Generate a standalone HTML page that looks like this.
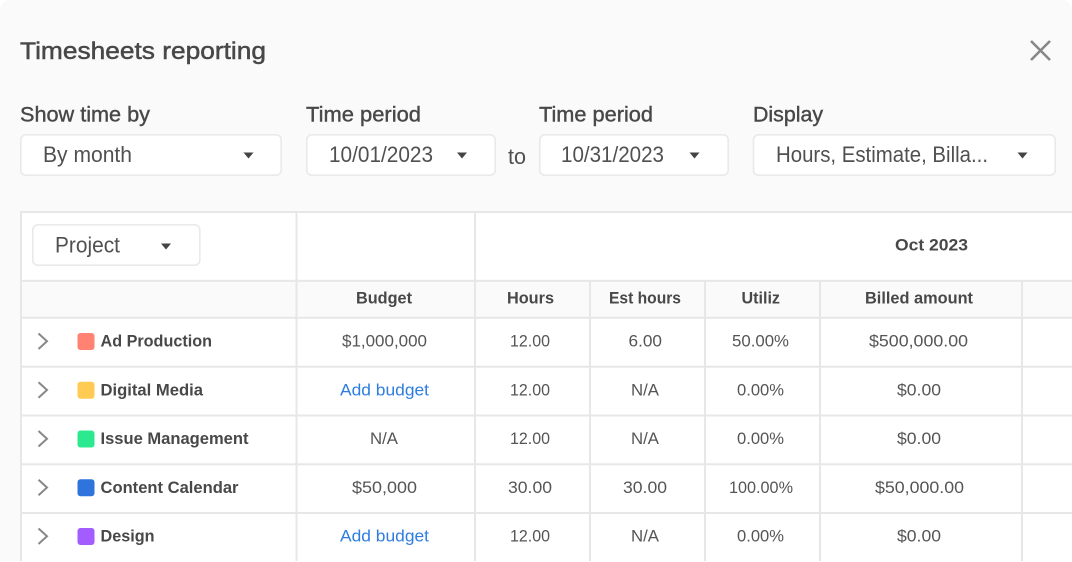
<!DOCTYPE html>
<html><head><meta charset="utf-8"><title>Timesheets reporting</title>
<style>
html,body{margin:0;padding:0;background:#fff;width:1072px;height:562px;overflow:hidden}
svg{display:block}
text{font-family:"Liberation Sans",sans-serif;fill:#4a4a4a}
.t{font-size:24.5px;fill:#484848;stroke:#484848;stroke-width:.5px}
.l{font-size:21.5px;fill:#484848;stroke:#484848;stroke-width:.4px}
.d{font-size:22px;fill:#505050}
.b{font-size:16.5px;font-weight:bold;fill:#484848}
.v{font-size:17px;fill:#555}
.a{font-size:17px;fill:#2f7de1}
.box{fill:#fff;stroke:#e9e9e9;stroke-width:1.6}
.g{fill:#e7e7e7}
.c{fill:none;stroke:#888;stroke-width:2}
.k{fill:#444}
</style></head><body>
<svg width="1072" height="562" viewBox="0 0 1072 562" xmlns="http://www.w3.org/2000/svg">
<rect x="0" y="0" width="1072" height="568" rx="10" fill="#fafafa"/>
<rect x="0" y="561" width="1072" height="1" fill="#fbfbfb"/>

<text class="t" x="20" y="59" textLength="246" lengthAdjust="spacingAndGlyphs">Timesheets reporting</text>
<path d="M1031 41L1050 60M1050 41L1031 60" fill="none" stroke="#888" stroke-width="2.6"/>

<text class="l" x="20" y="121.5" textLength="130" lengthAdjust="spacingAndGlyphs">Show time by</text>
<text class="l" x="306" y="121.5" textLength="115" lengthAdjust="spacingAndGlyphs">Time period</text>
<text class="l" x="539" y="121.5" textLength="114" lengthAdjust="spacingAndGlyphs">Time period</text>
<text class="l" x="753" y="121.5" textLength="70" lengthAdjust="spacingAndGlyphs">Display</text>

<rect class="box" x="20.800" y="134.800" width="260.400" height="40.400" rx="5"/>
<rect class="box" x="306.800" y="134.800" width="188.400" height="40.400" rx="5"/>
<rect class="box" x="539.800" y="134.800" width="188.400" height="40.400" rx="5"/>
<rect class="box" x="753.500" y="134.800" width="301.700" height="40.400" rx="5"/>

<text class="d" x="43" y="162" textLength="89" lengthAdjust="spacingAndGlyphs">By month</text>
<text class="d" x="329" y="162" textLength="104" lengthAdjust="spacingAndGlyphs">10/01/2023</text>
<text class="d" x="508" y="164" textLength="18" lengthAdjust="spacingAndGlyphs">to</text>
<text class="d" x="561" y="162" textLength="103" lengthAdjust="spacingAndGlyphs">10/31/2023</text>
<text class="d" x="776" y="162" textLength="212" lengthAdjust="spacingAndGlyphs">Hours, Estimate, Billa...</text>
<path class="k" d="M243.500 152.500H253.500L248.500 158.500Z"/>
<path class="k" d="M457 152.500H467L462 158.500Z"/>
<path class="k" d="M689.500 152.500H699.500L694.500 158.500Z"/>
<path class="k" d="M1017.500 152.500H1027.500L1022.500 158.500Z"/>

<!-- table -->
<rect x="21" y="212" width="1051" height="350" fill="#fff"/>
<rect x="21" y="281" width="1051" height="37" fill="#fafafa"/>
<rect class="g" x="20" y="211" width="1052" height="2"/>
<rect class="g" x="20" y="279.800" width="1052" height="2"/>
<rect class="g" x="20" y="316.800" width="1052" height="2"/>
<rect class="g" x="20" y="365.700" width="1052" height="2"/>
<rect class="g" x="20" y="414.500" width="1052" height="2"/>
<rect class="g" x="20" y="463.300" width="1052" height="2"/>
<rect class="g" x="20" y="512" width="1052" height="2"/>
<rect class="g" x="20" y="211" width="2" height="350"/>
<rect class="g" x="295.500" y="211" width="2" height="350"/>
<rect class="g" x="474" y="211" width="2" height="350"/>
<rect class="g" x="589" y="280" width="2" height="281"/>
<rect class="g" x="704" y="280" width="2" height="281"/>
<rect class="g" x="819" y="280" width="2" height="281"/>
<rect class="g" x="1021" y="280" width="2" height="281"/>

<rect class="box" x="32.800" y="224.800" width="167" height="40.400" rx="5"/>
<text class="d" x="55" y="252.700" textLength="65" lengthAdjust="spacingAndGlyphs">Project</text>
<path class="k" d="M161 243.500H171L166 249.500Z"/>
<text class="b" x="895" y="250.500" textLength="73" lengthAdjust="spacingAndGlyphs">Oct 2023</text>

<text class="b" x="356" y="303.300" textLength="56" lengthAdjust="spacingAndGlyphs">Budget</text>
<text class="b" x="507" y="303.300" textLength="47" lengthAdjust="spacingAndGlyphs">Hours</text>
<text class="b" x="609" y="303.300" textLength="72" lengthAdjust="spacingAndGlyphs">Est hours</text>
<text class="b" x="741.500" y="303.300" textLength="38.500" lengthAdjust="spacingAndGlyphs">Utiliz</text>
<text class="b" x="865" y="303.300" textLength="108" lengthAdjust="spacingAndGlyphs">Billed amount</text>

<!-- row 1 -->
<path class="c" d="M38.500 333.500L47 341.300L38.500 349"/>
<rect x="77.500" y="333" width="17" height="17" rx="3" fill="#ff8272"/>
<text class="b" x="100.500" y="346.500" textLength="111.500" lengthAdjust="spacingAndGlyphs">Ad Production</text>
<text class="v" x="342" y="346.500" textLength="85" lengthAdjust="spacingAndGlyphs">$1,000,000</text>
<text class="v" x="510" y="346.500" textLength="40" lengthAdjust="spacingAndGlyphs">12.00</text>
<text class="v" x="628.500" y="346.500" textLength="33.500" lengthAdjust="spacingAndGlyphs">6.00</text>
<text class="v" x="732" y="346.500" textLength="57" lengthAdjust="spacingAndGlyphs">50.00%</text>
<text class="v" x="869" y="346.500" textLength="99" lengthAdjust="spacingAndGlyphs">$500,000.00</text>

<!-- row 2 -->
<path class="c" d="M38.500 382.250L47 390.050L38.500 397.750"/>
<rect x="77.500" y="381.750" width="17" height="17" rx="3" fill="#ffcb52"/>
<text class="b" x="100.500" y="395.250" textLength="102.500" lengthAdjust="spacingAndGlyphs">Digital Media</text>
<text class="a" x="340" y="395.250" textLength="89" lengthAdjust="spacingAndGlyphs">Add budget</text>
<text class="v" x="510" y="395.250" textLength="40" lengthAdjust="spacingAndGlyphs">12.00</text>
<text class="v" x="631" y="395.250" textLength="28" lengthAdjust="spacingAndGlyphs">N/A</text>
<text class="v" x="737" y="395.250" textLength="47" lengthAdjust="spacingAndGlyphs">0.00%</text>
<text class="v" x="897" y="395.250" textLength="44" lengthAdjust="spacingAndGlyphs">$0.00</text>

<!-- row 3 -->
<path class="c" d="M38.500 431L47 438.800L38.500 446.500"/>
<rect x="77.500" y="430.500" width="17" height="17" rx="3" fill="#2ce88f"/>
<text class="b" x="100.500" y="444" textLength="148" lengthAdjust="spacingAndGlyphs">Issue Management</text>
<text class="v" x="370" y="444" textLength="28" lengthAdjust="spacingAndGlyphs">N/A</text>
<text class="v" x="510" y="444" textLength="40" lengthAdjust="spacingAndGlyphs">12.00</text>
<text class="v" x="631" y="444" textLength="28" lengthAdjust="spacingAndGlyphs">N/A</text>
<text class="v" x="737" y="444" textLength="47" lengthAdjust="spacingAndGlyphs">0.00%</text>
<text class="v" x="897" y="444" textLength="44" lengthAdjust="spacingAndGlyphs">$0.00</text>

<!-- row 4 -->
<path class="c" d="M38.500 479.750L47 487.550L38.500 495.250"/>
<rect x="77.500" y="479.250" width="17" height="17" rx="3" fill="#2f74dc"/>
<text class="b" x="100.500" y="492.750" textLength="138" lengthAdjust="spacingAndGlyphs">Content Calendar</text>
<text class="v" x="352" y="492.750" textLength="65" lengthAdjust="spacingAndGlyphs">$50,000</text>
<text class="v" x="508" y="492.750" textLength="44" lengthAdjust="spacingAndGlyphs">30.00</text>
<text class="v" x="623" y="492.750" textLength="44" lengthAdjust="spacingAndGlyphs">30.00</text>
<text class="v" x="729" y="492.750" textLength="64" lengthAdjust="spacingAndGlyphs">100.00%</text>
<text class="v" x="875" y="492.750" textLength="89" lengthAdjust="spacingAndGlyphs">$50,000.00</text>

<!-- row 5 -->
<path class="c" d="M38.500 528.500L47 536.300L38.500 544"/>
<rect x="77.500" y="528" width="17" height="17" rx="3" fill="#a35cff"/>
<text class="b" x="100.500" y="541.500" textLength="54" lengthAdjust="spacingAndGlyphs">Design</text>
<text class="a" x="340" y="541.500" textLength="89" lengthAdjust="spacingAndGlyphs">Add budget</text>
<text class="v" x="510" y="541.500" textLength="40" lengthAdjust="spacingAndGlyphs">12.00</text>
<text class="v" x="631" y="541.500" textLength="28" lengthAdjust="spacingAndGlyphs">N/A</text>
<text class="v" x="737" y="541.500" textLength="47" lengthAdjust="spacingAndGlyphs">0.00%</text>
<text class="v" x="897" y="541.500" textLength="44" lengthAdjust="spacingAndGlyphs">$0.00</text>
</svg>
</body></html>
